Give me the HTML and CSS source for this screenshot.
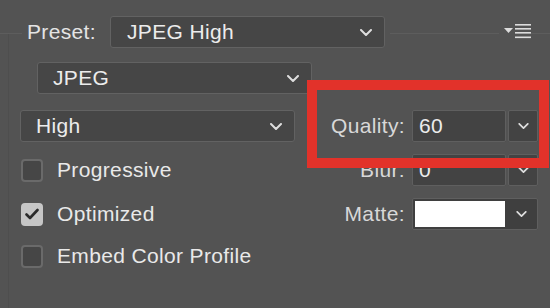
FILE: index.html
```html
<!DOCTYPE html>
<html>
<head>
<meta charset="utf-8">
<link rel="stylesheet" href="styles.css">
</head>
<body>
<div class="panel">
  <div class="top">
    <div class="preset-group">
      <span class="preset-lbl">Preset:</span>
      <div class="select w-preset"><span>JPEG High</span><svg class="chev" viewBox="0 0 12 7" width="12" height="7"><path d="M1 1 L6 6 L11 1"/></svg></div>
    </div>
    <div class="menu">
      <svg viewBox="0 0 27 16" width="27" height="16">
        <path class="tri" d="M0 4 H9 L4.5 9 Z"/>
        <rect class="ln" x="11" y="0" width="16" height="1.6"/>
        <rect class="ln" x="11" y="4" width="16" height="1.6"/>
        <rect class="ln" x="11" y="8" width="16" height="1.6"/>
        <rect class="ln" x="11" y="12.5" width="16" height="1.6"/>
      </svg>
    </div>
  </div>

  <div class="select w-format"><span>JPEG</span><svg class="chev" viewBox="0 0 12 7" width="12" height="7"><path d="M1 1 L6 6 L11 1"/></svg></div>

  <div class="grid">
    <div class="select w-quality"><span>High</span><svg class="chev" viewBox="0 0 12 7" width="12" height="7"><path d="M1 1 L6 6 L11 1"/></svg></div>
    <span class="lbl">Quality:</span>
    <div class="combo">
      <div class="field">60</div>
      <div class="cbtn"><svg class="chev small" viewBox="0 0 12 7" width="11" height="6"><path d="M1 1 L6 6 L11 1"/></svg></div>
    </div>

    <label class="check"><span class="box"></span><span>Progressive</span></label>
    <span class="lbl">Blur:</span>
    <div class="combo">
      <div class="field">0</div>
      <div class="cbtn"><svg class="chev small" viewBox="0 0 12 7" width="11" height="6"><path d="M1 1 L6 6 L11 1"/></svg></div>
    </div>

    <label class="check"><span class="box on"><svg viewBox="0 0 14 12" width="14" height="12"><path d="M1.5 6.5 L5 10 L12.5 2"/></svg></span><span>Optimized</span></label>
    <span class="lbl">Matte:</span>
    <div class="matte">
      <div class="swatch"></div>
      <div class="mbtn"><svg class="chev small" viewBox="0 0 12 7" width="11" height="6"><path d="M1 1 L6 6 L11 1"/></svg></div>
    </div>

    <label class="check"><span class="box"></span><span>Embed Color Profile</span></label>
  </div>
</div>
<div class="highlight"></div>
</body>
</html>
```

FILE: styles.css
```css
html, body {
  margin: 0;
  padding: 0;
}
body {
  width: 550px;
  height: 308px;
  overflow: hidden;
  position: relative;
  background-color: #535353;
  background-image:
    linear-gradient(#5d5d5d, #5d5d5d),
    linear-gradient(#4e4e4e, #4e4e4e);
  background-repeat: no-repeat;
  background-position: 0 33px, 8px 34px;
  background-size: 100% 1px, 1px 100%;
  font-family: "Liberation Sans", Arial, sans-serif;
  font-size: 21px;
  letter-spacing: 0.35px;
  color: #e9e9e9;
}
.panel {
  padding-top: 16px;
}
.top {
  display: flex;
  align-items: center;
  height: 32px;
}
.preset-group {
  display: flex;
  align-items: center;
  height: 32px;
  margin-left: 22px;
  padding: 0 5px;
  background: #535353;
}
.preset-lbl {
  width: 83px;
  color: #e4e4e4;
}
.menu {
  margin-left: auto;
  margin-right: 19px;
  padding-left: 5px;
  background: #535353;
  display: flex;
  align-items: center;
  height: 16px;
}
.menu .tri, .menu .ln {
  fill: #dcdcdc;
}
.select {
  box-sizing: border-box;
  height: 32px;
  display: flex;
  align-items: center;
  justify-content: space-between;
  background: #464646;
  border: 1.5px solid #626262;
  border-radius: 3px;
  padding: 0 12px 0 15px;
  color: #ececec;
}
.w-preset { width: 275px; padding-left: 16px; }
.w-format { width: 275px; margin-left: 37px; margin-top: 14px; }
.w-quality { width: 275px; padding-left: 15px; }
.chev {
  fill: none;
  stroke: #dedede;
  stroke-width: 2;
  stroke-linecap: round;
  stroke-linejoin: round;
}
.grid {
  display: grid;
  margin-top: 16px;
  margin-left: 20px;
  grid-template-columns: 275px 117px 126px;
  grid-template-rows: 32px 32px 32px 28px;
  row-gap: 12px;
  align-items: center;
}
.lbl {
  text-align: right;
  padding-right: 7px;
  color: #d8d8d8;
}
.combo {
  display: flex;
  height: 32px;
}
.field {
  box-sizing: border-box;
  width: 94px;
  height: 32px;
  background: #434343;
  border: 1px solid #5f5f5f;
  border-radius: 2px;
  padding-left: 6px;
  display: flex;
  align-items: center;
  color: #ececec;
}
.cbtn {
  box-sizing: border-box;
  width: 30px;
  height: 32px;
  margin-left: 2px;
  background: #434343;
  border: 1px solid #5f5f5f;
  border-radius: 2px;
  display: flex;
  align-items: center;
  justify-content: center;
}
.matte {
  box-sizing: border-box;
  display: flex;
  width: 126px;
  height: 32px;
  border: 1px solid #5f5f5f;
  border-radius: 2px;
  background: #3f3f3f;
  padding: 2px 0 2px 2px;
}
.swatch {
  width: 90px;
  background: #ffffff;
}
.mbtn {
  flex: 1;
  display: flex;
  align-items: center;
  justify-content: center;
}
.check {
  display: flex;
  align-items: center;
  color: #e9e9e9;
}
.box {
  box-sizing: border-box;
  width: 22px;
  height: 23px;
  margin-left: 1px;
  margin-right: 14px;
  border: 2px solid #6a6a6a;
  border-radius: 4px;
  background: #464646;
  display: flex;
  align-items: center;
  justify-content: center;
}
.box.on {
  background: #c6c6c6;
  border-color: #c6c6c6;
}
.box.on svg {
  fill: none;
  stroke: #2b2b2b;
  stroke-width: 2.6;
  stroke-linecap: round;
  stroke-linejoin: round;
}
.highlight {
  position: absolute;
  left: 307px;
  top: 80px;
  width: 242px;
  height: 88px;
  box-sizing: border-box;
  border: 10px solid #e2322a;
}
```
